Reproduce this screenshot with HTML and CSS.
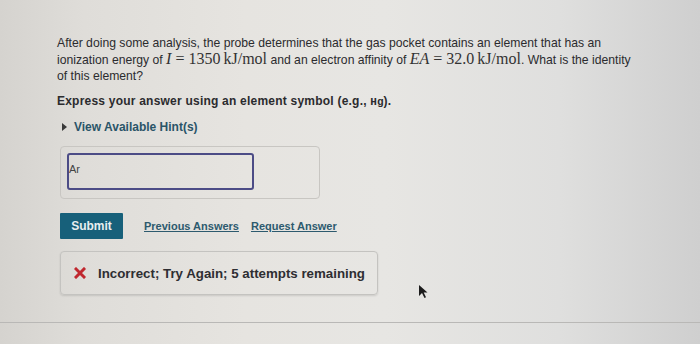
FILE: index.html
```html
<!DOCTYPE html>
<html>
<head>
<meta charset="utf-8">
<link rel="stylesheet" href="styles.css">
</head>
<body>
<div class="screen">
  <div class="problem">
    <p class="question">After doing some analysis, the probe determines that the gas pocket contains an element that has an<br>ionization energy of <span class="math"><i>I</i><span class="rel">=</span>1350<span class="unit">kJ/mol</span></span> and an electron affinity of <span class="math"><i>EA</i><span class="rel">=</span>32.0<span class="unit">kJ/mol</span></span>. What is the identity of this element?</p>
    <p class="instr">Express your answer using an element symbol (e.g., <span class="mono">Hg</span>).</p>
    <div class="hint"><span class="tri"></span>View Available Hint(s)</div>
    <div class="answer-box">
      <div class="input">Ar</div>
    </div>
    <div class="actions">
      <button class="submit">Submit</button>
      <a class="link prev">Previous Answers</a>
      <a class="link">Request Answer</a>
    </div>
    <div class="feedback">
      <svg class="xmark" width="12" height="12" viewBox="0 0 12 12"><path d="M2 2 L10 10 M10 2 L2 10" stroke="#c0282f" stroke-width="3" stroke-linecap="square"/></svg>
      <span>Incorrect; Try Again; 5 attempts remaining</span>
    </div>
  </div>
  <div class="divider"></div>
  <svg class="cursor" width="12" height="16" viewBox="0 0 12 16"><path d="M1 1 L1 12 L4 9 L6.5 14 L8 13.3 L5.7 8.5 L9.5 8.5 Z" fill="#1c1c1c"/></svg>
</div>
</body>
</html>
```
FILE: styles.css
```css
html, body {
  margin: 0;
  padding: 0;
}
body {
  width: 700px;
  height: 344px;
  overflow: hidden;
  font-family: "Liberation Sans", Arial, sans-serif;
  color: #2b2b2e;
}
.screen {
  position: relative;
  width: 700px;
  height: 344px;
  background: linear-gradient(90deg, #d5d3cf 0%, #dfddd9 12%, #e6e4e0 35%, #e7e6e3 55%, #dfdfde 80%, #cfcfcf 100%);
  overflow: hidden;
}
.problem {
  padding: 35px 0 0 57px;
}
.question {
  margin: 0;
  width: 580px;
  font-size: 12.2px;
  line-height: 16px;
}
.math {
  font-family: "Liberation Serif", "Times New Roman", serif;
  font-size: 16px;
  line-height: 1;
  color: #333;
}
.rel {
  padding: 0 4px;
}
.unit {
  padding-left: 3px;
}
.instr {
  margin: 10px 0 0 0;
  font-size: 12px;
  font-weight: bold;
  letter-spacing: 0.22px;
}
.mono {
  font-family: "Liberation Mono", monospace;
  font-size: 11px;
  letter-spacing: 0;
}
.hint {
  margin: 12px 0 0 5px;
  font-size: 12px;
  font-weight: bold;
  color: #2a5468;
  display: flex;
  align-items: center;
  gap: 7px;
}
.tri {
  width: 0;
  height: 0;
  border-left: 5px solid #3a3a3a;
  border-top: 4px solid transparent;
  border-bottom: 4px solid transparent;
}
.answer-box {
  margin: 12px 0 0 3px;
  width: 260px;
  height: 53px;
  border: 1px solid #c8c6c2;
  border-radius: 4px;
  box-sizing: border-box;
  padding: 6px 0 0 6px;
}
.input {
  width: 187px;
  height: 37px;
  box-sizing: border-box;
  border: 2px solid #4c4c86;
  border-radius: 3px;
  font-size: 11px;
  padding: 8px 0 0 0;
  color: #444;
}
.actions {
  margin: 14px 0 0 3px;
  display: flex;
  align-items: center;
  gap: 21px;
}
.submit {
  width: 63px;
  height: 26px;
  background: #17607a;
  color: #e8eef0;
  border: none;
  border-radius: 1px;
  font-family: "Liberation Sans", Arial, sans-serif;
  font-weight: bold;
  font-size: 12px;
  padding: 0;
}
.link {
  font-size: 11px;
  font-weight: bold;
  color: #2d5a6e;
  text-decoration: underline;
}
.prev {
  margin-right: -9px;
}
.feedback {
  margin: 12px 0 0 3px;
  width: 318px;
  height: 44px;
  box-sizing: border-box;
  border: 1px solid #c4c3c0;
  border-radius: 4px;
  box-shadow: 0 1px 2px rgba(0,0,0,0.12);
  display: flex;
  align-items: center;
  gap: 12px;
  padding-left: 13px;
  font-size: 13.3px;
  font-weight: bold;
  color: #2e2e32;
}
.divider {
  margin-top: 27px;
  height: 1px;
  background: #b9b8b6;
}
.cursor {
  position: absolute;
  left: 418px;
  top: 284px;
}
```
